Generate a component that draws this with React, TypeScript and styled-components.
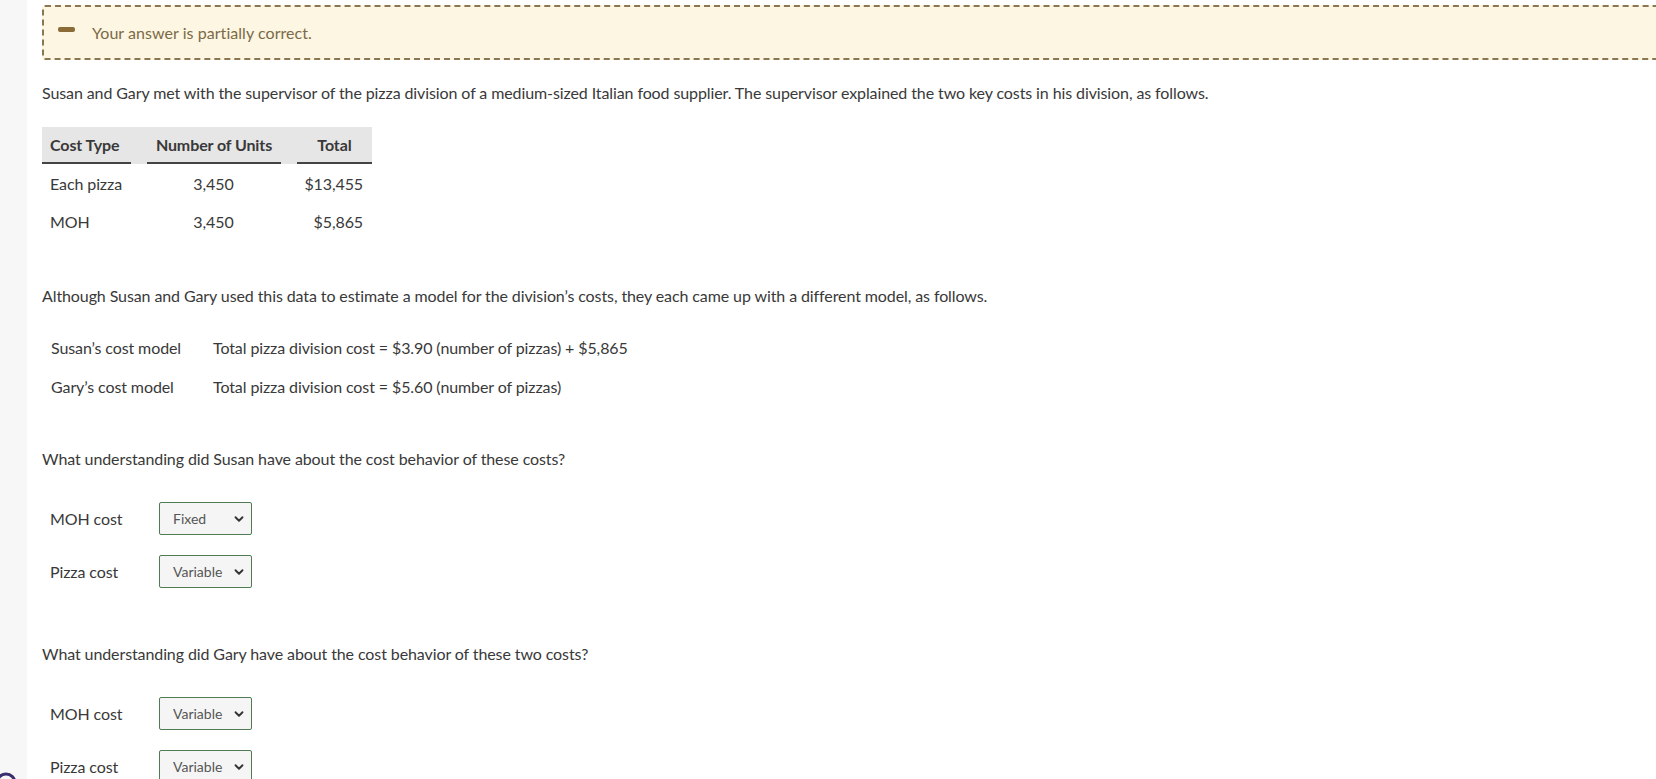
import React from "react";
import styled, { createGlobalStyle } from "styled-components";
import { ChevronDown } from "lucide-react";

const GlobalStyle = createGlobalStyle`
  html, body {
    margin: 0;
    padding: 0;
    height: 779px;
    overflow: hidden;
    background: #ffffff;
  }
  body {
    font-family: Lato, "Open Sans", "Liberation Sans", sans-serif;
    color: #393939;
    font-size: 16px;
    letter-spacing: -0.1px;
  }
`;

const costRows = [
  { type: "Each pizza", units: "3,450", total: "$13,455" },
  { type: "MOH", units: "3,450", total: "$5,865" },
];

const models = [
  { who: "Susan\u2019s cost model", formula: "Total pizza division cost = $3.90 (number of pizzas) + $5,865" },
  { who: "Gary\u2019s cost model", formula: "Total pizza division cost = $5.60 (number of pizzas)" },
];

const App = () => {
  return (
    <>
      <GlobalStyle />
      <Page>
        <Sidebar />
        <Main>
          <Banner>
            <MinusMark />
            <BannerText>Your answer is partially correct.</BannerText>
          </Banner>

          <Paragraph $top={21}>
            Susan and Gary met with the supervisor of the pizza division of a medium-sized Italian food
            supplier. The supervisor explained the two key costs in his division, as follows.
          </Paragraph>

          <CostTable>
            <thead>
              <tr>
                <HeadCell $w={97}>
                  <HeadLabel $edge="left" $align="left">Cost Type</HeadLabel>
                </HeadCell>
                <HeadCell $w={150}>
                  <HeadLabel $edge="mid" $align="center">Number of Units</HeadLabel>
                </HeadCell>
                <HeadCell $w={83}>
                  <HeadLabel $edge="right" $align="center">Total</HeadLabel>
                </HeadCell>
              </tr>
            </thead>
            <tbody>
              {costRows.map((r) => (
                <tr key={r.type}>
                  <BodyCell $align="left">{r.type}</BodyCell>
                  <BodyCell $align="center">{r.units}</BodyCell>
                  <BodyCell $align="right">{r.total}</BodyCell>
                </tr>
              ))}
            </tbody>
          </CostTable>

          <Paragraph $top={44}>
            Although Susan and Gary used this data to estimate a model for the division&rsquo;s costs, they
            each came up with a different model, as follows.
          </Paragraph>

          <ModelList>
            {models.map((m) => (
              <ModelRow key={m.who}>
                <ModelWho>{m.who}</ModelWho>
                <span>{m.formula}</span>
              </ModelRow>
            ))}
          </ModelList>

          <Paragraph $top={41}>What understanding did Susan have about the cost behavior of these costs?</Paragraph>

          <AnswerList>
            <AnswerRow label="MOH cost" value="Fixed" />
            <AnswerRow label="Pizza cost" value="Variable" />
          </AnswerList>

          <Paragraph $top={54}>What understanding did Gary have about the cost behavior of these two costs?</Paragraph>

          <AnswerList>
            <AnswerRow label="MOH cost" value="Variable" />
            <AnswerRow label="Pizza cost" value="Variable" />
          </AnswerList>
        </Main>
        <HelpBubble width="24" height="24" viewBox="0 0 24 24">
          <circle cx="6" cy="14" r="9" fill="none" stroke="#3b2d6e" strokeWidth="3" />
        </HelpBubble>
      </Page>
    </>
  );
};

const AnswerRow = ({ label, value }: { label: string; value: string }) => (
  <Answer>
    <AnswerLabel>{label}</AnswerLabel>
    <SelectWrap>
      <Select defaultValue={value}>
        <option value="">&nbsp;</option>
        <option value="Fixed">Fixed</option>
        <option value="Variable">Variable</option>
      </Select>
      <Chevron size={14} strokeWidth={3.2} />
    </SelectWrap>
  </Answer>
);

export default App;

const Page = styled.div`
  display: flex;
  min-height: 779px;
  position: relative;
`;

const Sidebar = styled.div`
  width: 27px;
  flex-shrink: 0;
  background: #f7f7f8;
`;

const Main = styled.div`
  flex: 1;
  padding: 5px 0 0 15px;
  overflow: hidden;
`;

const Banner = styled.div`
  display: flex;
  align-items: center;
  gap: 17px;
  height: 51px;
  margin-right: -30px;
  padding-left: 14px;
  background: #fdf6e2;
  border: 2px dashed #8a7651;
  border-radius: 3px;
`;

const MinusMark = styled.span`
  display: block;
  width: 17px;
  height: 5px;
  border-radius: 2px;
  background: #8b6c36;
  margin-top: -7px;
`;

const BannerText = styled.span`
  color: #7a6a47;
  font-size: 16px;
  line-height: 24px;
  letter-spacing: 0.05px;
`;

const Paragraph = styled.p<{ $top: number }>`
  margin: ${(p) => p.$top}px 0 0;
  font-size: 16px;
  line-height: 24px;
`;

const CostTable = styled.table`
  margin-top: 22px;
  border-collapse: separate;
  border-spacing: 0;
  font-size: 16px;
`;

const HeadCell = styled.th<{ $w: number }>`
  width: ${(p) => p.$w}px;
  padding: 0;
  background: #e6e6e6;
`;

const HeadLabel = styled.div<{ $edge: "left" | "mid" | "right"; $align: string }>`
  margin: ${(p) => (p.$edge === "left" ? "0 8px 0 0" : p.$edge === "mid" ? "0 8px" : "0 0 0 8px")};
  padding-left: ${(p) => (p.$edge === "left" ? "8px" : "0")};
  height: 35px;
  line-height: 35px;
  text-align: ${(p) => p.$align};
  font-weight: 700;
  border-bottom: 2px solid #444;
  white-space: nowrap;
`;

const BodyCell = styled.td<{ $align: string }>`
  height: 38px;
  padding: 0 9px 0 8px;
  text-align: ${(p) => p.$align};
  vertical-align: middle;
  white-space: nowrap;
`;

const ModelList = styled.div`
  margin-top: 20px;
  padding-left: 9px;
`;

const ModelRow = styled.div`
  display: flex;
  height: 39px;
  align-items: center;
`;

const ModelWho = styled.span`
  width: 162px;
  flex-shrink: 0;
`;

const AnswerList = styled.div`
  margin-top: 31px;
  padding-left: 8px;
  display: flex;
  flex-direction: column;
  gap: 20px;
`;

const Answer = styled.div`
  display: flex;
  align-items: center;
  height: 33px;
`;

const AnswerLabel = styled.span`
  width: 109px;
  flex-shrink: 0;
`;

const SelectWrap = styled.div`
  position: relative;
  width: 93px;
  height: 33px;
`;

const Select = styled.select`
  appearance: none;
  width: 100%;
  height: 100%;
  box-sizing: border-box;
  padding: 0 0 0 13px;
  border: 1px solid #4f7c52;
  border-radius: 2px;
  background: #f5f5f5;
  color: #555555;
  font-family: Lato, "Open Sans", "Liberation Sans", sans-serif;
  font-size: 14px;
  letter-spacing: 0;
`;

const Chevron = styled(ChevronDown)`
  position: absolute;
  right: 6px;
  top: 10px;
  color: #333333;
  pointer-events: none;
`;

const HelpBubble = styled.svg`
  position: absolute;
  left: 0;
  bottom: -10px;
`;
